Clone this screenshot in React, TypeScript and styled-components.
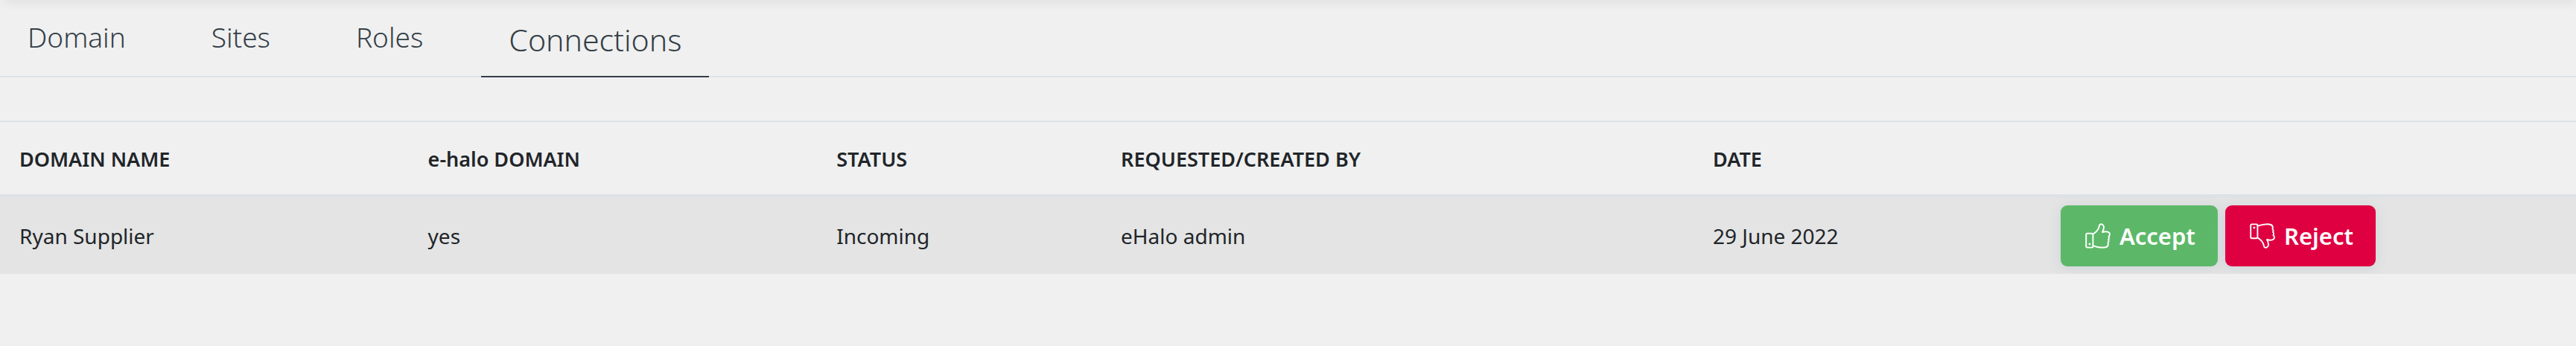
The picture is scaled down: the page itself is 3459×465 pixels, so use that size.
import React from 'react';
import styled, { createGlobalStyle } from 'styled-components';

const GlobalStyle = createGlobalStyle`
  *, *::before, *::after { box-sizing: border-box; }
  html { background: #f0f0f0; }
  body {
    margin: 0;
    background: #f0f0f0;
    color: #212529;
    font-family: "Noto Sans", "Open Sans", sans-serif;
  }
`;

const Page = styled.div`
  display: flex;
  flex-direction: column;
  overflow: hidden;
`;

const HeaderEdge = styled.div`
  height: 10px;
  margin: -10px 0 0 6px;
  box-shadow: 0 4px 14px rgba(0, 0, 0, 0.08);
`;

const TabBar = styled.nav`
  display: flex;
  gap: 41px;
  border-bottom: 2px solid #dee2e6;
`;

const Tab = styled.a<{ $active?: boolean }>`
  margin-bottom: -2px;
  padding: 18px 37px 14px;
  border-bottom: 2px solid ${p => (p.$active ? '#343f4b' : 'transparent')};
  color: #343f47;
  font-size: ${p => (p.$active ? 41 : 37)}px;
  font-weight: 350;
  line-height: ${p => (p.$active ? 70 : 64)}px;
  text-decoration: none;
`;

const Connections = styled.table`
  width: 100%;
  margin-top: 58px;
  border-collapse: separate;
  border-spacing: 0;
  table-layout: fixed;
`;

const Column = styled.col<{ $width?: string }>`
  width: ${p => p.$width ?? 'auto'};
`;

const HeadCell = styled.th`
  padding: 29px 26px 27px;
  border-top: 2px solid #dee2e6;
  border-bottom: 5px solid #dee2e6;
  font-size: 27px;
  font-weight: 600;
  line-height: 41px;
  text-align: left;
  white-space: nowrap;
`;

const Cell = styled.td`
  padding: 10px 26px;
  background: #e4e4e4;
  font-size: 28px;
  line-height: 42px;
  vertical-align: middle;
  white-space: nowrap;
`;

const Actions = styled.div`
  display: flex;
  gap: 10px;
`;

const ActionButton = styled.button<{ $color: string }>`
  display: flex;
  align-items: center;
  gap: 12px;
  padding: 18px 30px 18px 33px;
  border: 0;
  border-radius: 9px;
  background: ${p => p.$color};
  box-shadow: 0 2px 16px rgba(180, 190, 205, 0.45);
  color: #fff;
  font-family: inherit;
  font-size: 31px;
  font-weight: 600;
  line-height: 46px;
  cursor: pointer;
`;

const Icon = styled.svg`
  flex: none;
  width: 34px;
  height: 34px;
`;

const Thumb = ({ down = false }: { down?: boolean }) => (
  <Icon viewBox="0 0 34 34" fill="none" stroke="#fff" strokeWidth="1.9" strokeLinejoin="round" strokeLinecap="round" aria-hidden="true">
    <g transform={down ? 'translate(0 34) scale(1 -1)' : undefined}>
      <path d="M2.6 13.7H9a1.4 1.4 0 0 1 1.4 1.4v16.1A1.4 1.4 0 0 1 9 32.6H2.6a1.4 1.4 0 0 1-1.4-1.4V15.1a1.4 1.4 0 0 1 1.4-1.4Z" />
      <path d="M10.5 14.5C13.5 12.7 16.6 9.8 18 6.6C18.8 4.7 18.7 3.2 19.5 2.2C21 .6 24 1.2 24.8 4C25.4 6.5 24.5 9.2 23 12C25.5 11.3 28.2 11.1 30 11.6C32.2 12.2 33.2 13.6 32.8 15.6C32.6 16.7 32.1 17.5 31.4 18C32.3 18.9 32.2 20.8 31.1 22C31.8 23.2 31.5 24.9 30.5 25.9C31.2 28.6 30.2 31.2 28.3 32C24.5 33.3 17.5 32.6 10.6 30.3" />
      <circle cx="5.8" cy="28" r="1" fill="#fff" strokeWidth="1" />
    </g>
  </Icon>
);

const tabs = ['Domain', 'Sites', 'Roles', 'Connections'];

const columns = [
  { title: 'DOMAIN NAME', width: '15.86%' },
  { title: 'e-halo DOMAIN', width: '15.86%' },
  { title: 'STATUS', width: '11.04%' },
  { title: 'REQUESTED/CREATED BY', width: '22.98%' },
  { title: 'DATE', width: '13.5%' },
  { title: '' },
];

const requests = [['Ryan Supplier', 'yes', 'Incoming', 'eHalo admin', '29 June 2022']];

export default function App() {
  return (
    <Page>
      <GlobalStyle />
      <HeaderEdge />
      <TabBar>
        {tabs.map(name => (
          <Tab key={name} href={`#${name.toLowerCase()}`} $active={name === 'Connections'}>
            {name}
          </Tab>
        ))}
      </TabBar>
      <Connections>
        <colgroup>
          {columns.map(c => <Column key={c.title} $width={c.width} />)}
        </colgroup>
        <thead>
          <tr>
            {columns.map(c => <HeadCell key={c.title} scope="col">{c.title}</HeadCell>)}
          </tr>
        </thead>
        <tbody>
          {requests.map(row => (
            <tr key={row[0]}>
              {row.map(value => <Cell key={value}>{value}</Cell>)}
              <Cell>
                <Actions>
                  <ActionButton type="button" $color="#5cb868"><Thumb />Accept</ActionButton>
                  <ActionButton type="button" $color="#df0041"><Thumb down />Reject</ActionButton>
                </Actions>
              </Cell>
            </tr>
          ))}
        </tbody>
      </Connections>
    </Page>
  );
}
